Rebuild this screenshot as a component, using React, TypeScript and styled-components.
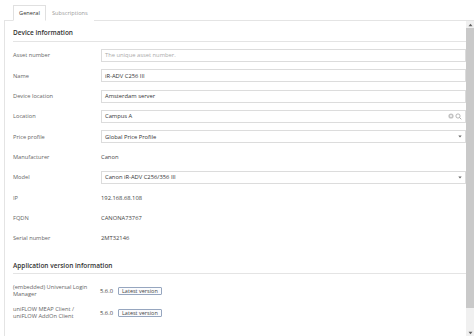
import React from "react";
import styled, { createGlobalStyle } from "styled-components";

const Global = createGlobalStyle`
  html, body { margin: 0; padding: 0; background: #fff; }
  body { font-family: "Open Sans", "Noto Sans", sans-serif; }
  * { box-sizing: border-box; }
`;

const Page = styled.div`
  width: 474px;
  height: 336px;
  display: flex;
  flex-direction: column;
  overflow: hidden;
  background: #fff;
`;

const TabBar = styled.div`
  height: 21px;
  margin-left: 4px;
  padding-left: 9px;
  display: flex;
  align-items: flex-end;
  border-bottom: 1px solid #e4e4e4;
`;

const Tab = styled.div<{ $active?: boolean }>`
  height: 16px;
  margin-bottom: -1px;
  padding: 0 5px;
  display: flex;
  align-items: center;
  font-size: 5.7px;
  color: ${(p) => (p.$active ? "#333" : "#9c9c9c")};
  border: 1px solid ${(p) => (p.$active ? "#e0e0e0" : "transparent")};
  border-bottom-color: ${(p) => (p.$active ? "#fff" : "transparent")};
  background: #fff;
`;

const Body = styled.div`
  flex: 1;
  display: flex;
  min-height: 0;
`;

const Panel = styled.div`
  flex: 1;
  margin-left: 4px;
  padding-left: 8px;
  border-left: 1px solid #e4e4e4;
  overflow: hidden;
`;

const SectionTitle = styled.div<{ $first?: boolean }>`
  font-size: 6.5px;
  font-weight: 600;
  color: #333;
  line-height: 10px;
  padding-top: ${(p) => (p.$first ? "7px" : "0")};
  margin-top: ${(p) => (p.$first ? "0" : "12.4px")};
  padding-bottom: 2.5px;
  border-bottom: 1px solid #e4e4e4;
  margin-bottom: ${(p) => (p.$first ? "3.8px" : "6.5px")};
`;

const Row = styled.div`
  height: 20.33px;
  display: grid;
  grid-template-columns: 88px 1fr;
  align-items: center;
`;

const Label = styled.div`
  font-size: 5.7px;
  color: #666;
  white-space: nowrap;
`;

const Value = styled.div`
  font-size: 5.8px;
  color: #444;
`;

const Field = styled.div<{ $placeholder?: boolean }>`
  height: 13px;
  border: 1px solid #dcdcdc;
  padding: 0 3px 0 3px;
  display: flex;
  align-items: center;
  font-size: 5.8px;
  color: ${(p) => (p.$placeholder ? "#aaa" : "#333")};
  background: #fff;
`;

const FieldText = styled.span`
  flex: 1;
  white-space: nowrap;
`;

const Adornments = styled.span`
  display: flex;
  align-items: center;
  gap: 1px;
`;

const AppRow = styled.div`
  height: 20px;
  margin-bottom: 2px;
  display: grid;
  grid-template-columns: 82px auto auto 1fr;
  align-items: center;
  column-gap: 5px;
`;

const AppLabel = styled.div`
  width: 80px;
  font-size: 5.7px;
  line-height: 6.5px;
  color: #666;
`;

const VersionButton = styled.div`
  height: 8px;
  padding: 0 3px;
  display: flex;
  align-items: center;
  font-size: 5.5px;
  color: #444;
  border: 1px solid #96a6bf;
  border-radius: 1px;
  background: #fbfcfe;
  white-space: nowrap;
`;

const Scrollbar = styled.div`
  width: 8px;
  display: flex;
  flex-direction: column;
  background: #f0f0f0;
`;

const ScrollArrow = styled.div`
  height: 7px;
  display: flex;
  align-items: center;
  justify-content: center;
`;

const Thumb = styled.div`
  height: 280px;
  background: #c9c9c9;
`;

const TrackRest = styled.div`
  flex: 1;
`;

const ClearIcon = () => (
  <svg width="6" height="6" viewBox="0 0 6 6">
    <circle cx="3" cy="3" r="2.6" fill="#c4c4c4" />
    <path d="M2 2 L4 4 M4 2 L2 4" stroke="#fff" strokeWidth="0.7" />
  </svg>
);

const SearchIcon = () => (
  <svg width="7" height="7" viewBox="0 0 7 7">
    <circle cx="3" cy="3" r="2.1" fill="none" stroke="#9a9a9a" strokeWidth="0.7" />
    <path d="M4.5 4.5 L6.3 6.3" stroke="#9a9a9a" strokeWidth="0.8" />
  </svg>
);

const Caret = () => (
  <svg width="4" height="3" viewBox="0 0 4 3">
    <path d="M0.3 0.6 L3.7 0.6 L2 2.6 Z" fill="#666" />
  </svg>
);

const ArrowUp = () => (
  <svg width="5" height="4" viewBox="0 0 5 4">
    <path d="M0.5 3.2 L4.5 3.2 L2.5 0.8 Z" fill="#606060" />
  </svg>
);

const ArrowDown = () => (
  <svg width="5" height="4" viewBox="0 0 5 4">
    <path d="M0.5 0.8 L4.5 0.8 L2.5 3.2 Z" fill="#606060" />
  </svg>
);

type Item =
  | { label: string; kind: "field"; value: string; placeholder?: boolean; adorn?: "search" | "select" }
  | { label: string; kind: "text"; value: string };

const items: Item[] = [
  { label: "Asset number", kind: "field", value: "The unique asset number.", placeholder: true },
  { label: "Name", kind: "field", value: "iR-ADV C256 III" },
  { label: "Device location", kind: "field", value: "Amsterdam server" },
  { label: "Location", kind: "field", value: "Campus A", adorn: "search" },
  { label: "Price profile", kind: "field", value: "Global Price Profile", adorn: "select" },
  { label: "Manufacturer", kind: "text", value: "Canon" },
  { label: "Model", kind: "field", value: "Canon iR-ADV C256/356 III", adorn: "select" },
  { label: "IP", kind: "text", value: "192.168.68.108" },
  { label: "FQDN", kind: "text", value: "CANONA73767" },
  { label: "Serial number", kind: "text", value: "2MT32146" },
];

const apps = [
  { label: "(embedded) Universal Login Manager", version: "5.6.0" },
  { label: "uniFLOW MEAP Client / uniFLOW AddOn Client", version: "5.6.0" },
];

export default function App() {
  return (
    <Page>
      <Global />
      <TabBar>
        <Tab $active>General</Tab>
        <Tab>Subscriptions</Tab>
      </TabBar>
      <Body>
        <Panel>
          <SectionTitle $first>Device information</SectionTitle>
          {items.map((it) => (
            <Row key={it.label}>
              <Label>{it.label}</Label>
              {it.kind === "text" ? (
                <Value>{it.value}</Value>
              ) : (
                <Field $placeholder={it.placeholder}>
                  <FieldText>{it.value}</FieldText>
                  {it.adorn === "search" && (
                    <Adornments>
                      <ClearIcon />
                      <SearchIcon />
                    </Adornments>
                  )}
                  {it.adorn === "select" && (
                    <Adornments>
                      <Caret />
                    </Adornments>
                  )}
                </Field>
              )}
            </Row>
          ))}
          <SectionTitle>Application version information</SectionTitle>
          {apps.map((a) => (
            <AppRow key={a.label}>
              <AppLabel>{a.label}</AppLabel>
              <Value>{a.version}</Value>
              <VersionButton>Latest version</VersionButton>
            </AppRow>
          ))}
        </Panel>
        <Scrollbar>
          <ScrollArrow>
            <ArrowUp />
          </ScrollArrow>
          <Thumb />
          <TrackRest />
          <ScrollArrow>
            <ArrowDown />
          </ScrollArrow>
        </Scrollbar>
      </Body>
    </Page>
  );
}
